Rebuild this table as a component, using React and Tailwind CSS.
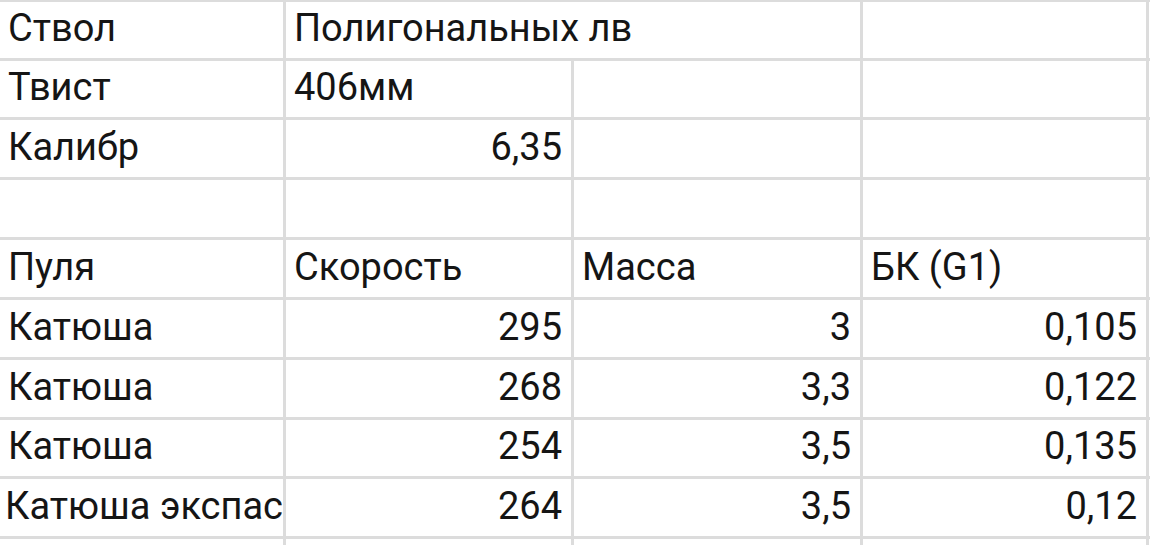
import React from "react";

const rows = [
  { h: "h-[59px]", cells: [{ t: "Ствол" }, { t: "Полигональных лв", span: true }, { t: "" }] },
  { h: "h-[59px]", cells: [{ t: "Твист" }, { t: "406мм" }, { t: "" }, { t: "" }] },
  { h: "h-[60px]", cells: [{ t: "Калибр" }, { t: "6,35", r: true }, { t: "" }, { t: "" }] },
  { h: "h-[60px]", cells: [{ t: "" }, { t: "" }, { t: "" }, { t: "" }] },
  { h: "h-[60px]", cells: [{ t: "Пуля" }, { t: "Скорость" }, { t: "Масса" }, { t: "БК (G1)" }] },
  { h: "h-[60px]", cells: [{ t: "Катюша" }, { t: "295", r: true }, { t: "3", r: true }, { t: "0,105", r: true }] },
  { h: "h-[60px]", cells: [{ t: "Катюша" }, { t: "268", r: true }, { t: "3,3", r: true }, { t: "0,122", r: true }] },
  { h: "h-[59px]", cells: [{ t: "Катюша" }, { t: "254", r: true }, { t: "3,5", r: true }, { t: "0,135", r: true }] },
  { h: "h-[60px]", cells: [{ t: "Катюша экспас", tight: true }, { t: "264", r: true }, { t: "3,5", r: true }, { t: "0,12", r: true }] },
  { h: "h-[60px]", cells: [{ t: "" }, { t: "" }, { t: "" }, { t: "" }] },
];

const widths = ["w-[286px]", "w-[288px]", "w-[289px]", "w-[286px]"];

function Cell({ cell, width }) {
  const align = cell.r ? "justify-end pr-[9px]" : cell.tight ? "justify-start pl-[5px]" : "justify-start pl-[8px]";
  return (
    <div
      className={`${width} shrink-0 h-full flex items-center pb-[4px] overflow-hidden whitespace-nowrap border-r-[3px] border-[#dcdcdc] ${align}`}
    >
      {cell.t}
    </div>
  );
}

export default function App() {
  return (
    <div
      className="w-[1150px] h-[545px] overflow-hidden bg-white text-[#151515] text-[38px] leading-none"
      style={{ fontFamily: "Roboto, 'Liberation Sans', sans-serif" }}
    >
      <div className="border-t-[2px] border-[#dcdcdc] w-[1160px]">
        {rows.map((row, i) => {
          let col = 0;
          return (
            <div key={i} className={`${row.h} flex border-b-[3px] border-[#dcdcdc]`}>
              {row.cells.map((cell, j) => {
                const w = cell.span ? "w-[577px]" : widths[col];
                col += cell.span ? 2 : 1;
                return <Cell key={j} cell={cell} width={w} />;
              })}
              <div className="flex-1" />
            </div>
          );
        })}
      </div>
    </div>
  );
}
